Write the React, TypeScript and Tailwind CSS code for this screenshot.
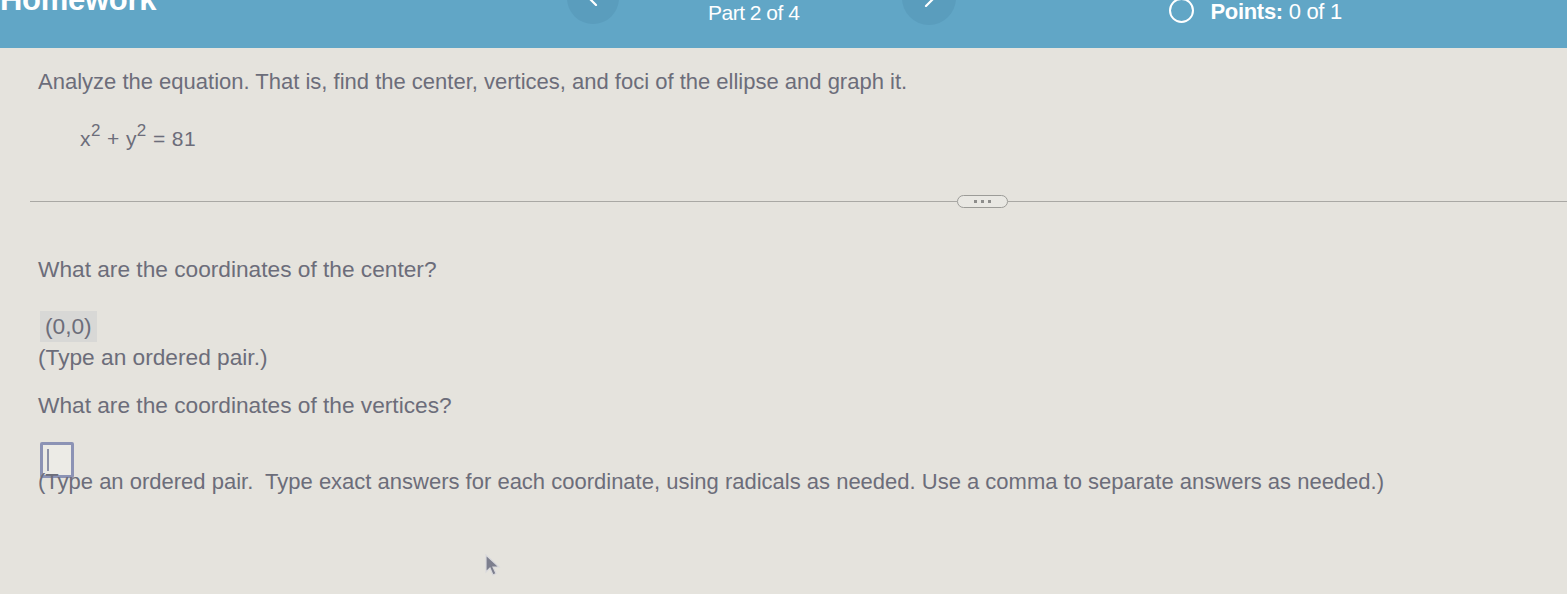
import React from "react";

const F = { fontFamily: '"Liberation Sans", Arial, Helvetica, sans-serif' };

function Cursor() {
  return (
    <svg width="18" height="24" viewBox="0 0 18 24" className="absolute left-[484px] top-[554px]">
      <path d="M2 1 L2 18 L6 14 L9 21 L12 19.5 L9 13 L15 13 Z" fill="#7d7f8e" stroke="#d9d9dc" strokeWidth="1.2" />
    </svg>
  );
}

export default function App() {
  return (
    <div className="relative w-[1567px] h-[594px] overflow-hidden bg-[#e5e3dd]" style={F}>
      <header className="flex items-start h-[48px] bg-[#61a6c6] overflow-hidden text-white">
        <div className="w-[567px] -mt-[23px] pl-[0px] text-[31px] font-bold tracking-[-0.3px]">Homework</div>
        <div className="w-[52px] h-[52px] -mt-[28px] rounded-full bg-[#5a9dbd] flex items-end justify-center pb-[18px]">
          <svg width="10" height="14" viewBox="0 0 10 14">
            <path d="M8 1 L2 7 L8 13" fill="none" stroke="white" strokeWidth="2.2" strokeLinecap="round" />
          </svg>
        </div>
        <div className="ml-[89px] -mt-[3px] text-[21px] tracking-[-0.5px]">Part 2 of 4</div>
        <div className="ml-[103px] w-[54px] h-[54px] -mt-[29px] rounded-full bg-[#5a9dbd] flex items-end justify-center pb-[18px]">
          <svg width="10" height="14" viewBox="0 0 10 14">
            <path d="M2 1 L8 7 L2 13" fill="none" stroke="white" strokeWidth="2.2" strokeLinecap="round" />
          </svg>
        </div>
        <div className="ml-[213px] -mt-[2px] w-[25px] h-[25px] rounded-full border-[2.5px] border-white" />
        <div className="ml-[16px] -mt-[5px] text-[22px] tracking-[-0.3px]">
          <span className="font-bold">Points:</span> 0 of 1
        </div>
      </header>

      <main className="text-[#6c6d7a]">
        <p className="pl-[38px] pt-[21px] text-[22px] leading-[26px]">
          Analyze the equation. That is, find the center, vertices, and foci of the ellipse and graph it.
        </p>
        <div className="pl-[80px] mt-[31px] h-[26px] text-[21px] leading-[26px] tracking-[0.4px]">
          x<sup className="text-[17px] relative -top-[10px]">2</sup> + y<sup className="text-[17px] relative -top-[10px]">2</sup> = 81
        </div>

        <div className="mt-[43px] ml-[30px] flex items-center">
          <div className="w-[927px] h-[1.5px] bg-[#a9a8a4]" />
          <div className="w-[51px] h-[13px] rounded-full border-[1.5px] border-[#9c9c98] bg-[#e9e8e3] flex items-center justify-center gap-[4px]">
            <span className="w-[3px] h-[3px] bg-[#8e8e8c]" />
            <span className="w-[3px] h-[3px] bg-[#8e8e8c]" />
            <span className="w-[3px] h-[3px] bg-[#8e8e8c]" />
          </div>
          <div className="flex-1 h-[1.5px] bg-[#a9a8a4]" />
        </div>

        <p className="pl-[38px] mt-[48px] text-[22.7px] leading-[26px]">What are the coordinates of the center?</p>

        <div className="ml-[40px] mt-[29px] w-[57px] h-[31px] bg-[#d8d8d6] text-[22.7px] leading-[31px] pl-[5px]">(0,0)</div>
        <p className="pl-[38px] mt-[2px] text-[22.7px] leading-[26px]">(Type an ordered pair.)</p>

        <p className="pl-[38px] mt-[22px] text-[22.7px] leading-[26px]">What are the coordinates of the vertices?</p>

        <div className="ml-[40px] mt-[24px] w-[34px] h-[36px] border-[3px] border-[#8c93b5] rounded-[2px] bg-[#ecebe6] flex items-center pl-[4px]">
          <div className="w-[1.5px] h-[22px] bg-[#8d92a8]" />
        </div>
        <p className="pl-[38px] -mt-[9px] text-[22px] leading-[26px]">
          (Type an ordered pair.&nbsp; Type exact answers for each coordinate, using radicals as needed. Use a comma to separate answers as needed.)
        </p>
      </main>

      <Cursor />
    </div>
  );
}
